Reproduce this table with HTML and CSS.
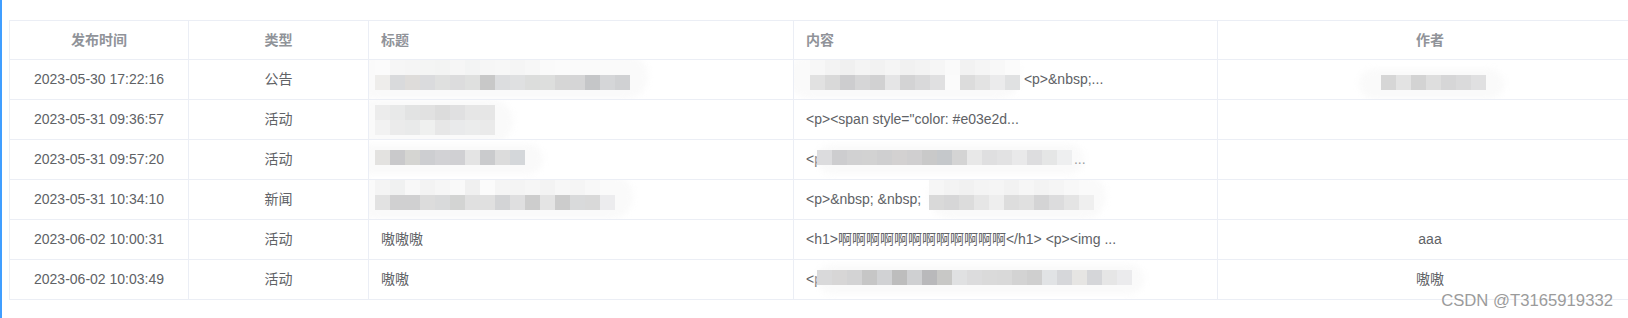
FILE: index.html
```html
<!DOCTYPE html>
<html lang="zh-CN">
<head>
<meta charset="utf-8">
<title>公告列表</title>
<link rel="stylesheet" href="styles.css">
</head>
<body>
<div class="page">
  <table class="grid">
    <colgroup>
      <col class="c-time"><col class="c-type"><col class="c-title"><col class="c-content"><col class="c-author">
    </colgroup>
    <thead>
      <tr>
        <th class="center"><div class="cell"><span>发布时间</span></div></th>
        <th class="center"><div class="cell"><span>类型</span></div></th>
        <th><div class="cell"><span>标题</span></div></th>
        <th><div class="cell"><span>内容</span></div></th>
        <th class="center"><div class="cell"><span>作者</span></div></th>
      </tr>
    </thead>
    <tbody>
      <tr>
        <td class="center"><div class="cell"><span>2023-05-30 17:22:16</span></div></td>
        <td class="center"><div class="cell"><span>公告</span></div></td>
        <td><div class="cell"><span class="mosaic ml-6" data-rows="fbfbfb f6f6f6 f5f5f5 f4f5f4 f3f4f3 f6f6f6 f3f4f4 f6f6f6 f7f7f7 f5f5f5 f7f7f7 fafafa fbfbfb - - - -|eeedeb d9dadc dedcda dadbdd dfe0df dcdcdd dfe0df c8c8c8 dcdddf dfe0e1 dcdddc dddedd d6d6d6 d5d5d6 c5c6c8 d5d6d8 d0d1d3"></span></div></td>
        <td><div class="cell"><span class="mosaic ml4 short-right" data-rows="f7f7f7 f3f3f3 f0f0f0 f4f4f4 f2f2f2 f5f5f5 f1f1f1 f3f3f3 f6f6f6 fafafa f2f2f2 f5f5f5 f8f8f8 fbfbfb|e1e1e1 d9d9d9 cdcdcf d6d6d7 d1d1d2 e5e5e6 d3d3d4 d9d9da e0e0e1 fbfbfb dcdcdc e3e3e3 ebebec e0e1e2"></span><span class="txt"> &lt;p&gt;&amp;nbsp;...</span></div></td>
        <td class="center"><div class="cell"><span class="mosaic ml6 mt15" data-rows="d6d6d6 e3e3e3 d3d3d3 dedede d6d6d7 dadadb e0e0e1"></span></div></td>
      </tr>
      <tr>
        <td class="center"><div class="cell"><span>2023-05-31 09:36:57</span></div></td>
        <td class="center"><div class="cell"><span>活动</span></div></td>
        <td><div class="cell"><span class="mosaic ml-6 mt5" data-rows="ececec e8e9e9 e2e3e3 e1e1e1 dcdcdc e0e0e1 e6e6e6 e6e6e6|f2f2f2 ebebeb e9eaea eff0ef e7e7e7 e9eaeb ebecec eaeaea"></span></div></td>
        <td><div class="cell"><span>&lt;p&gt;&lt;span style="color: #e03e2d...</span></div></td>
        <td class="center"><div class="cell"></div></td>
      </tr>
      <tr>
        <td class="center"><div class="cell"><span>2023-05-31 09:57:20</span></div></td>
        <td class="center"><div class="cell"><span>活动</span></div></td>
        <td><div class="cell"><span class="mosaic ml-6 mt10" data-rows="e3e2e0 c9c9cb d5d5d2 cdced1 d2d2d5 d0d0d3 e4e4e4 cacbcd dcdcdc d4d7da"></span></div></td>
        <td><div class="cell"><span class="txt">&lt;p</span><span class="mosaic ml-5 mt10 tight" data-rows="dcdcde cdcdcf d1d1d2 d2d2d2 cfcfd0 d3d1d1 d0cfd0 c9c9c9 c5c8cb d4d4d4 e8e8e8 dfdfe0 e2e2e3 e9e9ea dddddf e5e6e6 eeeff0"></span><span class="txt dots">...</span></div></td>
        <td class="center"><div class="cell"></div></td>
      </tr>
      <tr>
        <td class="center"><div class="cell"><span>2023-05-31 10:34:10</span></div></td>
        <td class="center"><div class="cell"><span>新闻</span></div></td>
        <td><div class="cell"><span class="mosaic ml-6" data-rows="f4f4f4 f0f1f1 f8f8f8 f3f3f3 f6f6f6 f9f9f9 f0f0f0 fbfbfb f5f5f5 f4f4f4 f6f6f6 f3f3f3 f7f7f7 f5f5f5 f8f8f8 fafafa|e2e2e2 d0d0d1 d0d0d1 dcdcdc d9dadb d3d4d3 e0e0e0 e0e0e0 d3d4d6 dfdfe0 cdcdcd e4e4e4 cccccc d9dadb d9d9d9 ececee"></span></div></td>
        <td><div class="cell"><span class="txt">&lt;p&gt;&amp;nbsp; &amp;nbsp;</span><span class="mosaic ml8 tight" data-rows="f6f6f6 f3f3f3 f1f1f1 f4f4f4 f5f5f5 f2f2f2 f6f6f6 f3f3f3 f5f5f5 f8f8f8 -|d9d9d9 d6d6d7 dcdcdc e6e6e6 eeeeee dddddd e0e0e0 d4d4d5 dcdcdd e4e4e4 efefef"></span></div></td>
        <td class="center"><div class="cell"></div></td>
      </tr>
      <tr>
        <td class="center"><div class="cell"><span>2023-06-02 10:00:31</span></div></td>
        <td class="center"><div class="cell"><span>活动</span></div></td>
        <td><div class="cell"><span>嗷嗷嗷</span></div></td>
        <td><div class="cell"><span>&lt;h1&gt;啊啊啊啊啊啊啊啊啊啊啊啊&lt;/h1&gt; &lt;p&gt;&lt;img ...</span></div></td>
        <td class="center"><div class="cell"><span>aaa</span></div></td>
      </tr>
      <tr>
        <td class="center"><div class="cell"><span>2023-06-02 10:03:49</span></div></td>
        <td class="center"><div class="cell"><span>活动</span></div></td>
        <td><div class="cell"><span>嗷嗷</span></div></td>
        <td><div class="cell"><span class="txt">&lt;p</span><span class="mosaic ml-5 mt10 tight" data-rows="d9d9da d7d6d6 d3d3d4 c6c6c6 d1d2d4 bdbdbd cfd0d2 b9b9bb c8c8c6 e0e1e2 dcdcdd dadada d9d9d9 d3d3d3 cfcfcf e1e3e5 d6d7da e6e5e3 d5d6d9 e6e6e6 ebebed"></span></div></td>
        <td class="center"><div class="cell"><span>嗷嗷</span></div></td>
      </tr>
    </tbody>
  </table>
  <div class="watermark">CSDN @T3165919332</div>
</div>
<script src="mosaic.js"></script>
</body>
</html>
```

FILE: styles.css
```css
html, body {
  margin: 0;
  padding: 0;
  background: #fff;
  overflow: hidden;
}

body {
  font-family: "Liberation Sans", "Noto Sans CJK SC", sans-serif;
  font-size: 14px;
  color: #606266;
}

.page {
  position: relative;
  box-sizing: border-box;
  width: 1628px;
  height: 318px;
  border-left: 2px solid #409eff;
  padding: 20px 0 0 7px;
  overflow: hidden;
}

.grid {
  border-collapse: separate;
  border-spacing: 0;
  table-layout: fixed;
  width: 1634px;
  border-top: 1px solid #ebeef5;
  border-left: 1px solid #ebeef5;
}

.c-time { width: 179px; }
.c-type { width: 180px; }
.c-title { width: 425px; }
.c-content { width: 424px; }
.c-author { width: 425px; }

.grid th,
.grid td {
  padding: 0;
  border-right: 1px solid #ebeef5;
  border-bottom: 1px solid #ebeef5;
  text-align: left;
}

.grid th {
  color: #909399;
  font-weight: bold;
}

.cell {
  display: flex;
  align-items: center;
  box-sizing: border-box;
  height: 39px;
  padding: 0 12px;
  white-space: pre;
  overflow: hidden;
  line-height: 23px;
}

.grid th .cell {
  height: 38px;
}

.center .cell {
  justify-content: center;
}

/* text pieces that sit next to a mosaic paint in DOM order with it */
.txt {
  position: relative;
}

.dots {
  margin-left: 2px;
  color: #9a9ca0;
}

/* pixelated (censored) blocks */
.mosaic {
  position: relative;
  display: flex;
  flex-direction: column;
  flex: none;
  align-self: flex-start;
}

.mosaic::before {
  content: "";
  position: absolute;
  top: -6px;
  bottom: -9px;
  left: -22px;
  right: -18px;
  background: #fafafa;
  border-radius: 22px;
  filter: blur(3px);
}

.mosaic.tight::before {
  left: 0;
  right: -12px;
}

.mosaic.short-right::before {
  right: 0;
}

.mrow {
  position: relative;
  display: flex;
}

.mb {
  flex: none;
  width: 15px;
  height: 15px;
}

.mt5 { margin-top: 5px; }
.mt10 { margin-top: 10px; }
.mt15 { margin-top: 15px; }
.ml-6 { margin-left: -6px; }
.ml-5 { margin-left: -5px; }
.ml4 { margin-left: 4px; }
.ml6 { margin-left: 6px; }
.ml8 { margin-left: 8px; }

.watermark {
  position: absolute;
  right: 15px;
  top: 293px;
  font-family: "Liberation Sans", sans-serif;
  font-size: 16.7px;
  line-height: 1;
  color: #9b9b9b;
  text-shadow: 0 0 1px #fff;
}
```

FILE: mosaic.js
```js
document.querySelectorAll('.mosaic').forEach(function (m) {
  m.dataset.rows.split('|').forEach(function (r) {
    var row = document.createElement('span');
    row.className = 'mrow';
    r.trim().split(/\s+/).forEach(function (c) {
      var b = document.createElement('span');
      b.className = 'mb';
      if (c !== '-') b.style.background = '#' + c;
      row.appendChild(b);
    });
    m.appendChild(row);
  });
});
```
